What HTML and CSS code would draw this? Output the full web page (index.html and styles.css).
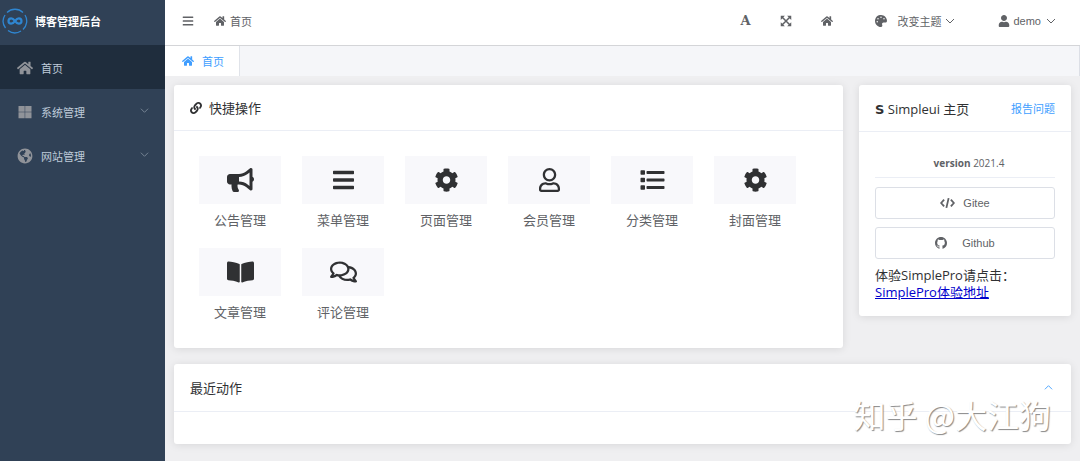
FILE: index.html
```html
<!DOCTYPE html>
<html lang="zh-CN">
  <head>
    <meta charset="UTF-8" />
    <meta name="viewport" content="width=device-width, initial-scale=1.0" />
    <title>博客管理后台</title>
    <link rel="stylesheet" href="styles.css">
  </head>
  <body>
    <!-- Shared icons -->
    <svg class="sprite" aria-hidden="true">
      <symbol id="home" viewBox="0 0 576 512"><path d="M280.37 148.26L96 300.11V464a16 16 0 0 0 16 16l112.06-.29a16 16 0 0 0 15.92-16V368a16 16 0 0 1 16-16h64a16 16 0 0 1 16 16v95.64a16 16 0 0 0 16 16.05L464 480a16 16 0 0 0 16-16V300L295.67 148.26a12.19 12.19 0 0 0-15.3 0zM571.6 251.47L488 182.56V44.05a12 12 0 0 0-12-12h-56a12 12 0 0 0-12 12v72.61L318.47 43a48 48 0 0 0-61 0L4.34 251.47a12 12 0 0 0-1.6 16.9l25.5 31A12 12 0 0 0 45.15 301l235.22-193.74a12.19 12.19 0 0 1 15.3 0L530.9 301a12 12 0 0 0 16.9-1.6l25.5-31a12 12 0 0 0-1.7-16.93z"/></symbol>
      <symbol id="cog" viewBox="0 0 512 512"><path d="M487.4 315.7l-42.6-24.6c4.3-23.2 4.3-47 0-70.2l42.6-24.6c4.9-2.8 7.1-8.6 5.5-14-11.1-35.6-30-67.8-54.7-94.6-3.8-4.1-10-5.1-14.8-2.3L380.8 110c-17.9-15.4-38.5-27.3-60.8-35.1V25.8c0-5.6-3.9-10.5-9.4-11.7-36.7-8.2-74.3-7.8-109.2 0-5.5 1.2-9.4 6.1-9.4 11.7V75c-22.2 7.9-42.8 19.8-60.8 35.1L88.7 85.5c-4.9-2.8-11-1.9-14.8 2.3-24.7 26.7-43.6 58.9-54.7 94.6-1.7 5.4.6 11.2 5.5 14L67.3 221c-4.3 23.2-4.3 47 0 70.2l-42.6 24.6c-4.9 2.8-7.1 8.6-5.5 14 11.1 35.6 30 67.8 54.7 94.6 3.8 4.1 10 5.1 14.8 2.3l42.6-24.6c17.9 15.4 38.5 27.3 60.8 35.1v49.2c0 5.6 3.9 10.5 9.4 11.7 36.7 8.2 74.3 7.8 109.2 0 5.5-1.2 9.4-6.1 9.4-11.7v-49.2c22.2-7.9 42.8-19.8 60.8-35.1l42.6 24.6c4.9 2.8 11 1.9 14.8-2.3 24.7-26.7 43.6-58.9 54.7-94.6 1.5-5.5-.7-11.3-5.6-14.1zM256 336c-44.1 0-80-35.9-80-80s35.9-80 80-80 80 35.9 80 80-35.9 80-80 80z"/></symbol>
      <symbol id="bars" viewBox="0 0 448 512"><path d="M16 60h416a16 16 0 0 1 16 16v40a16 16 0 0 1-16 16H16a16 16 0 0 1-16-16V76a16 16 0 0 1 16-16zm0 160h416a16 16 0 0 1 16 16v40a16 16 0 0 1-16 16H16a16 16 0 0 1-16-16v-40a16 16 0 0 1 16-16zm0 160h416a16 16 0 0 1 16 16v40a16 16 0 0 1-16 16H16a16 16 0 0 1-16-16v-40a16 16 0 0 1 16-16z"/></symbol>
      <symbol id="chevron" viewBox="0 0 10 10"><path d="M1 3l4 4 4-4" fill="none" stroke="currentColor"/></symbol>
    </svg>

    <div class="layout">
      <!-- Sidebar -->
      <aside class="sidebar">
        <div class="logo">
          <svg class="logo-mark" viewBox="0 0 26 26">
            <path d="M5 4.5A11.5 11.5 0 0 1 21 4.5M23 7a11.5 11.5 0 0 1-2 14.500M19 23a11.500 11.500 0 0 1-13-.5M3.500 20A11.500 11.500 0 0 1 3 7" stroke-width="1.300"/>
            <path d="M13 13c-1.500-2-2.500-2.700-3.800-2.700a2.700 2.700 0 0 0 0 5.400c1.300 0 2.300-.7 3.800-2.700s2.500-2.700 3.800-2.700a2.700 2.700 0 0 1 0 5.400c-1.300 0-2.300-.7-3.800-2.700z" stroke-width="2.200"/>
          </svg>
          <strong>博客管理后台</strong>
        </div>
        <nav>
          <a class="menu-item active" href="#">
            <svg class="menu-icon"><use href="#home"/></svg>首页
          </a>
          <a class="menu-item" href="#">
            <svg class="menu-icon" viewBox="0 0 16 16"><path d="M1.500 2h6.200v5.800H1.500zM8.200 2h6.300v5.800H8.200zM1.500 8.300h6.200v6H1.500zM8.200 8.300h6.300v6H8.200z"/></svg>系统管理
            <svg class="arrow"><use href="#chevron"/></svg>
          </a>
          <a class="menu-item" href="#">
            <svg class="menu-icon" viewBox="-20 0 536 512"><path d="M248 8C111.03 8 0 119.03 0 256s111.03 248 248 248 248-111.03 248-248S384.97 8 248 8zm82.29 357.6c-3.9 3.88-7.99 7.95-11.31 11.28-2.99 3-5.1 6.7-6.17 10.71-1.51 5.66-2.73 11.38-4.77 16.87l-17.39 46.85c-13.76 3-28 4.69-42.65 4.69v-27.38c1.69-12.62-7.64-36.26-22.63-51.25-6-6-9.37-14.14-9.37-22.63v-32.01c0-11.64-6.27-22.34-16.46-27.97-14.37-7.95-34.81-19.06-48.81-26.11-11.48-5.78-22.1-13.14-31.65-21.75l-.8-.72a114.792 114.792 0 0 1-18.06-20.74c-9.38-13.77-24.66-36.42-34.59-51.14 20.47-45.5 57.36-82.04 103.2-101.89l24.01 12.01C203.48 89.74 216 82.01 216 70.11v-11.3c7.99-1.29 16.12-2.11 24.39-2.42l28.3 28.3c6.25 6.25 6.25 16.38 0 22.63L264 112l-10.34 10.34c-3.12 3.12-3.12 8.19 0 11.31l4.69 4.69c3.12 3.12 3.12 8.19 0 11.31l-8 8a8.008 8.008 0 0 1-5.66 2.34h-8.99c-2.08 0-4.08.81-5.58 2.27l-9.92 9.65a8.008 8.008 0 0 0-1.58 9.31l15.59 31.19c2.66 5.32-1.21 11.58-7.15 11.58h-5.64c-1.93 0-3.79-.7-5.24-1.96l-9.28-8.06a16.017 16.017 0 0 0-15.55-3.1l-31.17 10.39a11.95 11.95 0 0 0-8.17 11.34c0 4.53 2.56 8.66 6.61 10.69l11.08 5.54c9.41 4.71 19.79 7.16 30.31 7.16s22.59 27.29 32 32h66.75c8.49 0 16.62 3.37 22.63 9.37l13.69 13.69a30.503 30.503 0 0 1 8.93 21.57 46.536 46.536 0 0 1-13.72 32.98zM417 274.25c-5.79-1.45-10.84-5-14.15-9.97l-17.98-26.97a23.97 23.97 0 0 1 0-26.62l19.59-29.38c2.32-3.47 5.5-6.29 9.24-8.15l12.98-6.49C440.2 193.59 448 223.87 448 256c0 8.67-.74 17.16-1.82 25.54L417 274.25z"/></svg>网站管理
            <svg class="arrow"><use href="#chevron"/></svg>
          </a>
        </nav>
      </aside>

      <div class="page">
        <!-- Top bar -->
        <header class="topbar">
          <button type="button" class="tool" aria-label="菜单"><svg><use href="#bars"/></svg></button>
          <a class="crumb" href="#"><svg><use href="#home"/></svg>首页</a>
          <div class="tools">
            <button type="button" class="tool font-size">A</button>
            <button type="button" class="tool" aria-label="全屏">
              <svg viewBox="0 0 16 16"><path d="M2 2l12 12M14 2L2 14" stroke="currentColor" stroke-width="2"/><path d="M1 1h5.500L1 6.500zM15 1v5.500L9.500 1zM1 15V9.500L6.500 15zM15 15H9.500L15 9.500z"/></svg>
            </button>
            <button type="button" class="tool" aria-label="主页"><svg><use href="#home"/></svg></button>
            <button type="button" class="tool theme">
              <svg viewBox="0 0 512 512"><path d="M204.3 5C104.9 24.4 24.8 104.3 5.200 203.4c-37 187 131.7 326.4 258.8 306.7 41.2-6.4 61.4-54.6 42.5-91.7-23.1-45.4 9.9-98.4 60.9-98.4h79.7c35.8 0 64.8-29.6 64.9-65.3C511.5 97.1 368.1-26.9 204.3 5zM96 320c-17.7 0-32-14.3-32-32s14.3-32 32-32 32 14.3 32 32-14.3 32-32 32zm32-128c-17.7 0-32-14.3-32-32s14.3-32 32-32 32 14.3 32 32-14.3 32-32 32zm128-64c-17.7 0-32-14.3-32-32s14.3-32 32-32 32 14.3 32 32-14.3 32-32 32zm128 64c-17.7 0-32-14.3-32-32s14.3-32 32-32 32 14.3 32 32-14.3 32-32 32z"/></svg>
              <span>改变主题</span>
              <svg class="caret"><use href="#chevron"/></svg>
            </button>
            <button type="button" class="tool user">
              <svg viewBox="0 0 448 512"><path d="M224 256c70.7 0 128-57.3 128-128S294.7 0 224 0 96 57.3 96 128s57.3 128 128 128zm89.6 32h-16.7c-22.2 10.2-46.9 16-72.9 16s-50.6-5.8-72.9-16h-16.7C60.2 288 0 348.2 0 422.4V464c0 26.5 21.5 48 48 48h352c26.5 0 48-21.5 48-48v-41.6c0-74.2-60.2-134.4-134.4-134.4z"/></svg>
              <span>demo</span>
              <svg class="caret"><use href="#chevron"/></svg>
            </button>
          </div>
        </header>

        <div class="tabs">
          <a class="tab" href="#"><svg><use href="#home"/></svg>首页</a>
        </div>

        <main class="content">
          <!-- Quick actions -->
          <section class="card quick">
            <div class="card-head">
              <svg viewBox="0 0 512 512"><path d="M326.612 185.391c59.747 59.809 58.927 155.698.36 214.59-.11.12-.24.25-.36.37l-67.2 67.2c-59.27 59.27-155.699 59.262-214.96 0-59.27-59.26-59.27-155.7 0-214.96l37.106-37.106c9.84-9.84 26.786-3.3 27.294 10.606.648 17.722 3.826 35.527 9.69 52.721 1.986 5.822.567 12.262-3.783 16.612l-13.087 13.087c-28.026 28.026-28.905 73.66-1.155 101.96 28.024 28.579 74.086 28.749 102.325.51l67.2-67.19c28.191-28.191 28.073-73.757 0-101.83-3.701-3.694-7.429-6.564-10.341-8.569a16.037 16.037 0 0 1-6.947-12.606c-.396-10.567 3.348-21.456 11.698-29.806l21.054-21.055c5.521-5.521 14.182-6.199 20.584-1.731a152.482 152.482 0 0 1 20.522 17.197zM467.547 44.449c-59.261-59.262-155.69-59.27-214.96 0l-67.2 67.2c-.12.12-.25.25-.36.37-58.566 58.892-59.387 154.781.36 214.59a152.454 152.454 0 0 0 20.521 17.196c6.402 4.468 15.064 3.789 20.584-1.731l21.054-21.055c8.35-8.35 12.094-19.239 11.698-29.806a16.037 16.037 0 0 0-6.947-12.606c-2.912-2.005-6.64-4.875-10.341-8.569-28.073-28.073-28.191-73.639 0-101.83l67.2-67.19c28.239-28.239 74.3-28.069 102.325.51 27.75 28.3 26.872 73.934-1.155 101.96l-13.087 13.087c-4.35 4.35-5.769 10.79-3.783 16.612 5.864 17.194 9.042 34.999 9.69 52.721.509 13.906 17.454 20.446 27.294 10.606l37.106-37.106c59.271-59.259 59.271-155.699.001-214.959z"/></svg>
              <span>快捷操作</span>
            </div>
            <div class="actions">
              <a class="action" href="#">
                <span class="tile"><svg viewBox="0 0 576 512"><path d="M576 240c0-23.63-12.95-44.04-32-55.12V32.01C544 23.26 537.02 0 512 0c-7.12 0-14.19 2.38-19.98 7.02l-85.03 68.03C364.28 109.19 310.66 128 256 128H64c-35.35 0-64 28.65-64 64v96c0 35.35 28.65 64 64 64h33.7c-1.39 10.48-2.18 21.14-2.18 32 0 39.77 9.26 77.35 25.56 110.94 5.19 10.69 16.52 17.06 28.4 17.06h74.28c26.05 0 41.69-29.84 25.9-50.56-16.4-21.52-26.15-48.36-26.15-77.44 0-11.11 1.62-21.79 4.41-32H256c54.66 0 108.28 18.81 150.98 52.95l85.03 68.03a32.023 32.023 0 0 0 19.98 7.02c24.92 0 32-22.78 32-32V295.13C563.05 284.04 576 263.63 576 240zm-96 141.42l-33.05-26.44C392.95 311.78 325.12 288 256 288v-96c69.12 0 136.95-23.78 190.95-66.98L480 98.58v282.84z"/></svg></span>
                公告管理
              </a>
              <a class="action" href="#">
                <span class="tile"><svg><use href="#bars"/></svg></span>
                菜单管理
              </a>
              <a class="action" href="#">
                <span class="tile"><svg><use href="#cog"/></svg></span>
                页面管理
              </a>
              <a class="action" href="#">
                <span class="tile"><svg viewBox="0 0 448 512"><path d="M313.6 304c-28.7 0-42.5 16-89.6 16-47.1 0-60.8-16-89.6-16C60.2 304 0 364.2 0 438.4V464c0 26.5 21.5 48 48 48h352c26.5 0 48-21.5 48-48v-25.6c0-74.2-60.2-134.4-134.4-134.4zM400 464H48v-25.6c0-47.6 38.8-86.4 86.4-86.4 14.6 0 38.3 16 89.6 16 51.7 0 74.9-16 89.6-16 47.6 0 86.4 38.8 86.4 86.4V464zM224 288c79.5 0 144-64.5 144-144S303.5 0 224 0 80 64.5 80 144s64.5 144 144 144zm0-240c52.9 0 96 43.1 96 96s-43.1 96-96 96-96-43.1-96-96 43.1-96 96-96z"/></svg></span>
                会员管理
              </a>
              <a class="action" href="#">
                <span class="tile"><svg viewBox="0 0 512 512"><path d="M16 48h64a16 16 0 0 1 16 16v64a16 16 0 0 1-16 16H16a16 16 0 0 1-16-16V64a16 16 0 0 1 16-16zm0 160h64a16 16 0 0 1 16 16v64a16 16 0 0 1-16 16H16a16 16 0 0 1-16-16v-64a16 16 0 0 1 16-16zm0 160h64a16 16 0 0 1 16 16v64a16 16 0 0 1-16 16H16a16 16 0 0 1-16-16v-64a16 16 0 0 1 16-16zM144 64h352a16 16 0 0 1 16 16v32a16 16 0 0 1-16 16H144a16 16 0 0 1-16-16V80a16 16 0 0 1 16-16zm0 160h352a16 16 0 0 1 16 16v32a16 16 0 0 1-16 16H144a16 16 0 0 1-16-16v-32a16 16 0 0 1 16-16zm0 160h352a16 16 0 0 1 16 16v32a16 16 0 0 1-16 16H144a16 16 0 0 1-16-16v-32a16 16 0 0 1 16-16z"/></svg></span>
                分类管理
              </a>
              <a class="action" href="#">
                <span class="tile"><svg><use href="#cog"/></svg></span>
                封面管理
              </a>
              <a class="action" href="#">
                <span class="tile"><svg viewBox="0 0 576 512"><path d="M542.22 32.05c-54.8 3.11-163.72 14.43-230.96 55.59-4.64 2.84-7.27 7.89-7.27 13.17v363.87c0 11.55 12.63 18.85 23.28 13.49 69.18-34.82 169.23-44.32 218.7-46.92 16.89-.89 30.02-14.43 30.02-30.66V62.75c.01-17.71-15.35-31.74-33.77-30.7zM264.73 87.64C197.5 46.48 88.58 35.17 33.78 32.05 15.36 31.01 0 45.04 0 62.75V400.6c0 16.24 13.13 29.78 30.02 30.66 49.49 2.6 149.59 12.11 218.77 46.95 10.62 5.35 23.21-1.94 23.21-13.46V100.63c0-5.29-2.62-10.14-7.27-12.99z"/></svg></span>
                文章管理
              </a>
              <a class="action" href="#">
                <span class="tile"><svg viewBox="0 0 576 512"><path d="M532 386.2c27.5-27.1 44-61.1 44-98.2 0-80-76.5-146.1-176.2-157.9C368.3 72.5 294.3 32 208 32 93.1 32 0 103.6 0 192c0 37 16.5 71 44 98.2-15.3 30.7-37.3 54.5-37.7 54.9-6.3 6.7-8.1 16.5-4.4 25 3.6 8.500 12 14 21.2 14 53.5 0 96.7-20.2 125.2-38.8 9.2 2.1 18.7 3.7 28.4 4.9C208.1 407.6 281.8 448 368 448c20.8 0 40.8-2.4 59.8-6.8C456.3 459.7 499.4 480 553 480c9.2 0 17.5-5.5 21.2-14 3.6-8.5 1.9-18.3-4.4-25-.4-.3-22.5-24.1-37.8-54.8zm-392.8-92.3L122.1 305c-14.1 9.1-28.5 16.3-43.1 21.4 2.7-4.7 5.4-9.7 8-14.8l15.5-31.1L77.7 256C64.2 242.6 48 220.7 48 192c0-60.7 73.3-112 160-112s160 51.3 160 112-73.3 112-160 112c-16.5 0-33-1.9-49-5.6l-19.8-4.5zM498.3 352l-24.7 24.4 15.5 31.1c2.6 5.1 5.3 10.1 8 14.8-14.6-5.1-29-12.3-43.1-21.4l-17.1-11.1-19.9 4.6c-16 3.7-32.5 5.6-49 5.6-54 0-102.2-20.1-131.3-49.7C338 339.5 416 272.9 416 192c0-3.4-.4-6.7-.7-10C479.7 196.5 528 238.8 528 288c0 28.7-16.2 50.6-29.7 64z"/></svg></span>
                评论管理
              </a>
            </div>
          </section>

          <!-- Simpleui info -->
          <section class="card info">
            <div class="card-head">
              <span><b class="s-mark">S</b> Simpleui 主页</span>
              <a class="report" href="#">报告问题</a>
            </div>
            <div class="info-body">
              <p class="version"><b>version</b> 2021.4</p>
              <button type="button" class="repo">
                <svg viewBox="0 0 20 16"><path d="M5.500 3.500L1.500 8l4 4.500M14.500 3.500l4 4.500-4 4.500M11.500 1.500l-3 13" fill="none" stroke="currentColor" stroke-width="2.400"/></svg>
                Gitee
              </button>
              <button type="button" class="repo">
                <svg viewBox="0 0 20 16"><path d="M8 0C3.58 0 0 3.58 0 8c0 3.54 2.29 6.53 5.47 7.59.4.07.55-.17.55-.38 0-.19-.01-.82-.01-1.49-2.01.37-2.53-.49-2.69-.94-.09-.23-.48-.94-.82-1.13-.28-.15-.68-.52-.01-.53.63-.01 1.08.58 1.23.82.72 1.21 1.87.87 2.33.66.07-.52.28-.87.51-1.07-1.78-.2-3.64-.89-3.64-3.95 0-.87.31-1.59.82-2.15-.08-.2-.36-1.02.08-2.12 0 0 .67-.21 2.2.82.64-.18 1.32-.27 2-.27s1.36.09 2 .27c1.53-1.04 2.2-.82 2.2-.82.44 1.1.16 1.92.08 2.12.51.56.82 1.27.82 2.15 0 3.07-1.87 3.75-3.65 3.95.29.25.54.73.54 1.48 0 1.07-.01 1.93-.01 2.2 0 .21.15.46.55.38A8.01 8.01 0 0 0 16 8c0-4.42-3.58-8-8-8z"/></svg>
                Github
              </button>
              <p class="pro">体验SimplePro请点击：<br><a href="#">SimplePro体验地址</a></p>
            </div>
          </section>

          <!-- Recent activity -->
          <section class="card recent">
            <div class="card-head">
              <span>最近动作</span>
              <button type="button" class="collapse" aria-label="收起"><svg viewBox="0 0 10 10"><path d="M1 7l4-4 4 4" fill="none" stroke="currentColor"/></svg></button>
            </div>
            <div class="recent-body"></div>
          </section>
        </main>
      </div>
    </div>
    <div class="watermark">知乎 @大江狗</div>
  </body>
</html>
```

FILE: styles.css
```css
* {
  box-sizing: border-box;
}

body {
  margin: 0;
  font-family: "Open Sans", "Noto Sans CJK SC", sans-serif;
  font-size: 13px;
  color: #303133;
  background-color: #efeff1;
}

a {
  color: inherit;
  text-decoration: none;
}

button {
  padding: 0;
  border: none;
  background: none;
  color: inherit;
  font-family: "Liberation Sans", "Noto Sans CJK SC", sans-serif;
  font-size: 11px;
  cursor: pointer;
}

svg {
  display: block;
  flex: none;
  width: 12px;
  height: 12px;
  fill: currentColor;
}

.sprite {
  display: none;
}

.layout {
  display: flex;
  min-height: 100vh;
}

/* sidebar */
.sidebar {
  flex: none;
  width: 165px;
  background-color: #304156;
  color: #bfcbd9;
  font-size: 11px;
}

.logo {
  display: flex;
  align-items: center;
  gap: 7px;
  height: 45px;
  padding: 0 2px 3px;
  color: #fff;
}

.logo-mark {
  width: 26px;
  height: 26px;
  fill: none;
  stroke: #2f86d1;
}

.menu-item {
  display: flex;
  align-items: center;
  gap: 8px;
  height: 44px;
  padding: 2px 16px 0 17px;
}

.menu-item.active {
  background-color: #1f2d3d;
}

.menu-icon {
  width: 16px;
  height: 16px;
  color: #909399;
}

.arrow {
  width: 9px;
  height: 9px;
  margin-left: auto;
  margin-bottom: 4px;
  color: #7d8b9b;
}

/* top bar */
.page {
  flex: 1;
  min-width: 0;
}

.topbar {
  display: flex;
  align-items: center;
  height: 46px;
  padding: 0 24px 4px 17px;
  background-color: #fff;
  border-bottom: 1px solid #d4d5d8;
  color: #606266;
  font-size: 11px;
}

.crumb {
  display: flex;
  align-items: center;
  gap: 4px;
  margin-left: 20px;
}

.tools {
  display: flex;
  align-items: center;
  margin-left: auto;
}

.tool {
  display: flex;
  align-items: center;
  justify-content: center;
  min-width: 12px;
}

.tools .tool {
  margin-left: 29px;
}

.tools .font-size {
  font-family: "DejaVu Serif", serif;
  font-size: 13px;
  font-weight: bold;
}

.tools .theme {
  gap: 10px;
  margin-left: 42px;
}

.tools .user {
  gap: 3px;
  margin-left: 43px;
}

.caret {
  width: 10px;
  height: 10px;
}

.theme .caret {
  margin-left: -6px;
}

.user .caret {
  margin-left: 2px;
}

.tabs {
  display: flex;
  height: 30px;
  background-color: #f5f6f9;
  border-right: 1px solid #dcdfe6;
}

.tab {
  display: flex;
  align-items: center;
  gap: 8px;
  padding: 0 15px 0 17px;
  background-color: #fff;
  border-right: 1px solid #e0e3e9;
  color: #409eff;
  font-size: 11px;
}

/* cards */
.content {
  display: grid;
  grid-template-columns: 1fr 212px;
  align-items: start;
  gap: 16px;
  padding: 9px;
}

.card {
  background-color: #fff;
  border-radius: 3px;
  box-shadow: 0 1px 8px rgba(0, 0, 0, 0.1);
}

.card-head {
  display: flex;
  align-items: center;
  gap: 7px;
  height: 46px;
  padding: 0 16px;
  border-bottom: 1px solid #ebeef5;
}

.actions {
  display: flex;
  flex-wrap: wrap;
  gap: 16px 21px;
  padding: 25px 25px 24px;
}

.action {
  width: 82px;
  color: #606266;
  line-height: 24px;
  text-align: center;
}

.tile {
  display: flex;
  align-items: center;
  justify-content: center;
  height: 48px;
  margin-bottom: 4px;
  background-color: #f8f8fb;
  color: #303133;
}

.tile svg {
  width: 27px;
  height: 24px;
}

.info .card-head {
  justify-content: space-between;
  height: 47px;
}

.s-mark {
  font-family: "DejaVu Sans", sans-serif;
  font-weight: bold;
  line-height: 16px;
}

.report {
  color: #409eff;
  font-size: 11px;
}

.info-body {
  padding: 20px 16px 15px;
}

.version {
  margin: 0 0 9px;
  padding: 1px 0 4px 8px;
  border-bottom: 1px solid #ebeef5;
  color: #606266;
  font-size: 10px;
  line-height: 20px;
  text-align: center;
}

.repo {
  display: flex;
  align-items: center;
  justify-content: center;
  gap: 8px;
  width: 100%;
  height: 32px;
  margin-bottom: 8px;
  border: 1px solid #dcdfe6;
  border-radius: 3px;
  color: #606266;
}

.repo svg {
  width: 15px;
}

.repo + .repo {
  gap: 12px;
}

.pro {
  margin: 0;
  line-height: 17px;
}

.pro a {
  color: #0000cc;
  text-decoration: underline;
}

.recent {
  grid-column: 1 / -1;
}

.recent .card-head {
  justify-content: space-between;
  height: 48px;
}

.collapse {
  padding: 0 2px;
  color: #409eff;
}

.collapse svg {
  width: 9px;
  height: 9px;
}

.recent-body {
  height: 32px;
}

/* watermark laid over the page */
.watermark {
  position: absolute;
  right: 29px;
  bottom: 23px;
  color: #fff;
  font-family: "Noto Sans CJK SC", sans-serif;
  font-size: 32px;
  line-height: 48px;
  text-shadow: 1px 1px 1px #888;
  pointer-events: none;
}
```
